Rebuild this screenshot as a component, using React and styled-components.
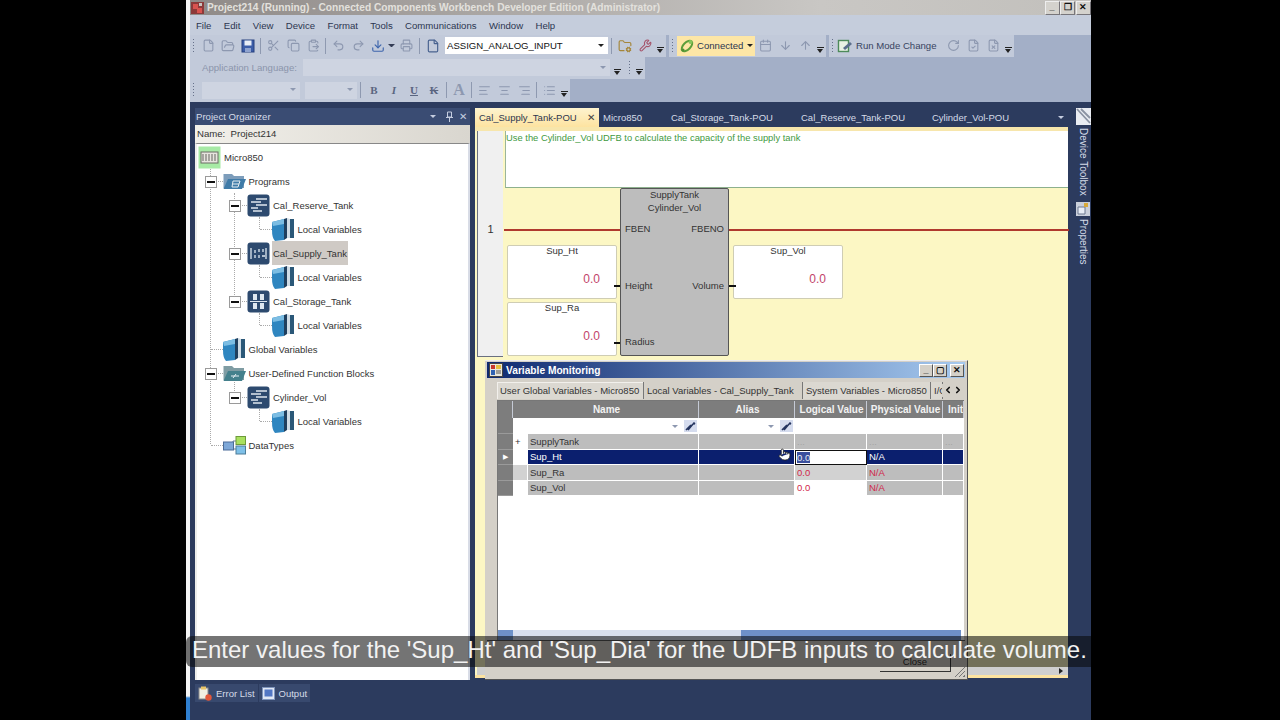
import React from 'react';
import styled, {createGlobalStyle} from 'styled-components';
import {
    File, FolderOpen, Scissors, Copy, ClipboardPaste, Undo2, Redo2, Download, Printer,
    FolderCog, Wrench, Calendar, ArrowDown, ArrowUp, RotateCw, FileCheck, FileX, Pointer,
    AlignLeft, AlignCenter, AlignRight, List, ChevronLeft, ChevronRight
} from 'lucide-react';

const GlobalStyle = createGlobalStyle`
  html, body, #root {
    margin: 0;
    padding: 0;
    width: 1280px;
    height: 720px;
    overflow: hidden;
    background: #000;
  }
  * { box-sizing: border-box; }
`

const SaveIcon = () => (
    <svg width="14" height="14" viewBox="0 0 14 14">
        <rect x="1" y="1" width="12" height="12" fill="#3c5da8" stroke="#26407f"/>
        <rect x="3.5" y="1.5" width="7" height="5" fill="#e8edf6"/>
        <rect x="4" y="9" width="6" height="4" fill="#8fa3cf"/>
    </svg>
)

const LinkIcon = () => (
    <svg width="16" height="16" viewBox="0 0 16 16" fill="none">
        <ellipse cx="8" cy="8" rx="6.5" ry="3.6" transform="rotate(-45 8 8)" stroke="#5c9e3a" strokeWidth="2"/>
        <circle cx="11.5" cy="4" r="2" fill="#86c45b"/>
        <circle cx="4" cy="12" r="1.6" fill="#4f8f32"/>
    </svg>
)

const RunModeIcon = () => (
    <svg width="16" height="14" viewBox="0 0 16 14" fill="none">
        <rect x="1.5" y="1.5" width="10" height="11" fill="#e9f2e4" stroke="#4d8a5a" strokeWidth="1.4"/>
        <path d="M6 9 L13 3 L15 5 L8 11 Z" fill="#5b6f8c"/>
    </svg>
)

const AppLogo = () => (
    <svg width="14" height="14" viewBox="0 0 14 14">
        <rect x="0" y="1" width="13" height="12" fill="#8c3a3a"/>
        <path d="M2 3 H7 V7 H11 V12 H6 V8 H2 Z" fill="#d9534f"/>
        <rect x="8" y="2" width="3" height="3" fill="#c9c4c0"/>
    </svg>
)

const ControllerIcon = () => (
    <svg width="23" height="23" viewBox="0 0 23 23">
        <rect x="0.5" y="0.5" width="22" height="22" fill="#a7eaa5"/>
        <rect x="3" y="6" width="17" height="11" fill="#e7e5df" stroke="#6d6d66"/>
        <path d="M5 8 V15 M8 8 V15 M11 8 V15 M14 8 V15 M17 8 V15" stroke="#8a8a84" strokeWidth="1.4"/>
    </svg>
)

const FolderIcon = ({udfb}) => (
    <svg width="23" height="18" viewBox="0 0 23 18">
        <path d="M0.5 2 H9 L11 4 H21 V16 H0.5 Z" fill={udfb ? "#7f9ca3" : "#7d9dbb"}/>
        <path d="M0.5 17 L5 7 H23 L19 17 Z" fill={udfb ? "#44808c" : "#3f7ba8"}/>
        <path d={udfb ? "M8 12 H16 M10 14 L13 10" : "M10 9 H17 L15 15 H9 Z M10 12 H16"} stroke="#e6eef3" strokeWidth="1" fill="none"/>
    </svg>
)

const ProgramIcon = ({kind}) => (
    <svg width="23" height="23" viewBox="0 0 23 23">
        <rect x="0.5" y="0.5" width="22" height="22" rx="3" fill="#2d4a6f"/>
        {kind === "ladder" && (
            <path d="M4 6 V17 M19 6 V17 M8 8 V11 M8 13 V16 M12 7 V10 M12 13 V16 M16 7 V10 M15 14 H18" stroke="#dfe8f0" strokeWidth="1.3" fill="none"/>
        )}
        {kind === "blocks" && (
            <g fill="#dfe8f0">
                <rect x="6" y="4" width="4" height="6"/>
                <rect x="13" y="4" width="4" height="6"/>
                <rect x="6" y="13" width="4" height="6"/>
                <rect x="13" y="13" width="4" height="6"/>
                <rect x="3" y="11" width="17" height="1"/>
            </g>
        )}
        {kind === "text" && (
            <path d="M9 5 H20 M4 8 H14 M9 11 H20 M4 14 H11 M6 17 H15" stroke="#dfe8f0" strokeWidth="1.5" fill="none"/>
        )}
    </svg>
)

const VariablesIcon = () => (
    <svg width="22" height="23" viewBox="0 0 22 23">
        <path d="M0 4 L12 1 V22 L3 23 Q0 20 0 12 Z" fill="#2f86c0"/>
        <path d="M0 4 L12 1 L12 6 L1 8 Z" fill="#7cbde3"/>
        <path d="M12 1 L15 0 V20 L12 22 Z" fill="#1f3f5e"/>
        <path d="M15 0 L18 1 V20 L15 20 Z" fill="#cfdce6"/>
        <path d="M18 1 L22 1 V20 L18 20 Z" fill="#2b5878"/>
    </svg>
)

const DataTypesIcon = () => (
    <svg width="23" height="19" viewBox="0 0 23 19">
        <path d="M10 5 H15 M10 13 H13 M10 5 V13" stroke="#6b7f99"/>
        <rect x="0.5" y="6" width="10" height="8" fill="#7ea8d8" stroke="#4c6d99"/>
        <rect x="13" y="0.5" width="9.5" height="8" fill="#a9e05f" stroke="#6d9a3a"/>
        <rect x="13" y="10" width="9.5" height="8" fill="#7ec0e8" stroke="#4c7d99"/>
    </svg>
)

const ErrorListIcon = () => (
    <svg width="14" height="15" viewBox="0 0 14 15">
        <rect x="1" y="2" width="9" height="11" fill="#f1eee2" stroke="#8b8b8b"/>
        <rect x="3" y="0.5" width="5" height="3" fill="#e8c468"/>
        <circle cx="10.5" cy="11.5" r="3.2" fill="#e2573b"/>
    </svg>
)

const OutputIcon = () => (
    <svg width="13" height="13" viewBox="0 0 13 13">
        <rect x="0.5" y="0.5" width="12" height="12" fill="#dfe7f5" stroke="#7f94bb"/>
        <rect x="2.5" y="2.5" width="8" height="7" fill="#5277c4"/>
    </svg>
)

const GridFilterIcon = () => (
    <svg width="13" height="12" viewBox="0 0 13 12">
        <rect width="13" height="12" fill="#d5dcee"/>
        <path d="M2 10 L7 5 M4 10 L9 4" stroke="#24345f" strokeWidth="1.6"/>
        <circle cx="10" cy="3.5" r="1.2" fill="#24345f"/>
    </svg>
)

const MonitorIcon = () => (
    <svg width="14" height="14" viewBox="0 0 14 14">
        <rect x="0.5" y="0.5" width="13" height="13" fill="#e9e6dc" stroke="#444"/>
        <rect x="2" y="2" width="4" height="4" fill="#c8372d"/>
        <rect x="7" y="2" width="5" height="4" fill="#e8c13f"/>
        <rect x="2" y="7" width="4" height="5" fill="#2f62b3"/>
        <path d="M7 8 H12 M7 10 H12" stroke="#555"/>
    </svg>
)

const PinIcon = () => (
    <svg width="9" height="11" viewBox="0 0 9 11" fill="none">
        <path d="M2.5 1 H6.5 V6 H2.5 Z M1 6.5 H8 M4.5 7 V11" stroke="#c5cde0"/>
    </svg>
)

const ToolboxIcon = () => (
    <svg width="15" height="17" viewBox="0 0 15 17">
        <rect width="15" height="17" fill="#e9ecf2"/>
        <path d="M1 1 L14 15 M5 1 L14 10" stroke="#8b93a3" strokeWidth="1.8" fill="none"/>
    </svg>
)

const PropertiesIcon = () => (
    <svg width="14" height="14" viewBox="0 0 14 14">
        <rect width="14" height="14" fill="#c9cfdb"/>
        <path d="M2 5 H9 V12 H2 Z" fill="#e8edf6" stroke="#6d7890"/>
        <path d="M8 1 H12 V5 H8 Z" fill="#d7a93a"/>
    </svg>
)

const Toolbars = () => (
    <>
        <ToolRow>
            <ToolGroup>
                <Grip/>
                <ToolBtn><File size={13}/></ToolBtn>
                <ToolBtn><FolderOpen size={14}/></ToolBtn>
                <ToolBtn><SaveIcon/></ToolBtn>
                <ToolSep/>
                <ToolBtn><Scissors size={13}/></ToolBtn>
                <ToolBtn><Copy size={13}/></ToolBtn>
                <ToolBtn><ClipboardPaste size={13}/></ToolBtn>
                <ToolSep/>
                <ToolBtn><Undo2 size={13}/></ToolBtn>
                <ToolBtn><Redo2 size={13}/></ToolBtn>
                <ToolBtn $tone="#3f66ad"><Download size={14}/></ToolBtn>
                <Caret/>
                <ToolBtn><Printer size={13}/></ToolBtn>
                <ToolSep $wide/>
                <ToolBtn $tone="#48628f"><File size={14}/></ToolBtn>
                <ComboGap $w={2}/>
                <Combo $width={163} $active>ASSIGN_ANALOG_INPUT<ComboArrow $dark/></Combo>
                <ToolSep $wide/>
                <ToolBtn $tone="#a5863a"><FolderCog size={14}/></ToolBtn>
                <ToolBtn $tone="#a5536a"><Wrench size={13}/></ToolBtn>
                <Overflow/>
            </ToolGroup>
            <ToolGroup>
                <Grip/>
                <ConnectedBtn><LinkIcon/>Connected<ComboArrow $dark/></ConnectedBtn>
                <ToolBtn><Calendar size={13}/></ToolBtn>
                <ToolBtn><ArrowDown size={13}/></ToolBtn>
                <ToolBtn><ArrowUp size={13}/></ToolBtn>
                <Overflow/>
            </ToolGroup>
            <ToolGroup>
                <Grip/>
                <RunModeBtn><RunModeIcon/>Run Mode Change</RunModeBtn>
                <ToolBtn><RotateCw size={13}/></ToolBtn>
                <ToolBtn><FileCheck size={13}/></ToolBtn>
                <ToolBtn><FileX size={13}/></ToolBtn>
                <Overflow/>
            </ToolGroup>
        </ToolRow>
        <ToolRow>
            <ToolGroup>
                <DisabledLabel>Application Language:</DisabledLabel>
                <Combo $width={307}><ComboArrow/></Combo>
                <ComboGap $w={2}/>
                <Overflow/>
                <ComboGap $w={3}/>
                <Grip/>
                <Overflow/>
            </ToolGroup>
        </ToolRow>
        <ToolRow $tall>
            <ToolGroup>
                <Grip/>
                <ComboGap $w={4}/>
                <Combo $width={98}><ComboArrow/></Combo>
                <ComboGap $w={5}/>
                <Combo $width={52}><ComboArrow/></Combo>
                <ToolSep $wide/>
                <Glyph>B</Glyph>
                <Glyph $italic>I</Glyph>
                <Glyph $underline>U</Glyph>
                <Glyph $strike>K</Glyph>
                <ToolSep/>
                <Glyph $big>A</Glyph>
                <ToolSep/>
                <ToolBtn><AlignLeft size={13}/></ToolBtn>
                <ToolBtn><AlignCenter size={13}/></ToolBtn>
                <ToolBtn><AlignRight size={13}/></ToolBtn>
                <ToolSep/>
                <ToolBtn><List size={13}/></ToolBtn>
                <Overflow/>
            </ToolGroup>
        </ToolRow>
    </>
)

const treeRows = [
    {level: 0, label: "Micro850", icon: <ControllerIcon/>},
    {level: 1, label: "Programs", icon: <FolderIcon/>, open: true},
    {level: 2, label: "Cal_Reserve_Tank", icon: <ProgramIcon kind="text"/>, open: true},
    {level: 3, label: "Local Variables", icon: <VariablesIcon/>},
    {level: 2, label: "Cal_Supply_Tank", icon: <ProgramIcon kind="ladder"/>, open: true, selected: true},
    {level: 3, label: "Local Variables", icon: <VariablesIcon/>},
    {level: 2, label: "Cal_Storage_Tank", icon: <ProgramIcon kind="blocks"/>, open: true},
    {level: 3, label: "Local Variables", icon: <VariablesIcon/>},
    {level: 1, label: "Global Variables", icon: <VariablesIcon/>},
    {level: 1, label: "User-Defined Function Blocks", icon: <FolderIcon udfb/>, open: true},
    {level: 2, label: "Cylinder_Vol", icon: <ProgramIcon kind="text"/>, open: true},
    {level: 3, label: "Local Variables", icon: <VariablesIcon/>},
    {level: 1, label: "DataTypes", icon: <DataTypesIcon/>},
]

const guides = [
    {x: 13, y: 25, h: 275},
    {x: 37, y: 49, h: 108},
    {x: 37, y: 229, h: 24},
    {x: 62, y: 73, h: 12},
    {x: 62, y: 121, h: 12},
    {x: 62, y: 169, h: 12},
    {x: 62, y: 265, h: 12},
]

const ProjectOrganizer = () => (
    <Organizer>
        <PaneHeader>
            Project Organizer
            <PaneActions>
                <ComboArrow $light/>
                <PinIcon/>
                <span>✕</span>
            </PaneActions>
        </PaneHeader>
        <NameBar>Name:&nbsp;&nbsp;Project214</NameBar>
        <Tree>
            {guides.map((g, i) => <Guide key={i} $x={g.x} $y={g.y} $h={g.h}/>)}
            {treeRows.map((row, i) => (
                <TreeRow key={i} $level={row.level}>
                    <TreeIcon $branch={row.level > 0}>
                        {row.open && <Expander/>}
                        {row.icon}
                    </TreeIcon>
                    <TreeLabel $selected={row.selected}>{row.label}</TreeLabel>
                </TreeRow>
            ))}
        </Tree>
    </Organizer>
)

const LadderEditor = () => (
    <Document>
        <DocTabs>
            <DocTab $active>Cal_Supply_Tank-POU<TabClose>✕</TabClose></DocTab>
            <DocTab $width={68}>Micro850</DocTab>
            <DocTab $width={130}>Cal_Storage_Tank-POU</DocTab>
            <DocTab $width={131}>Cal_Reserve_Tank-POU</DocTab>
            <DocTab $width={110}>Cylinder_Vol-POU</DocTab>
            <ComboArrow $light/>
        </DocTabs>
        <EditorBody>
            <Rung>
                <RungGutter>1</RungGutter>
                <RungMain>
                    <RungComment>Use the Cylinder_Vol UDFB to calculate the capacity of the supply tank</RungComment>
                    <RungCanvas>
                        <Wire $x={-1} $w={116}/>
                        <Wire $x={224} $w={340}/>
                        <VarBox $x={2} $y={57}>Sup_Ht<VarValue>0.0</VarValue></VarBox>
                        <VarBox $x={2} $y={114}>Sup_Ra<VarValue>0.0</VarValue></VarBox>
                        <VarBox $x={228} $y={57}>Sup_Vol<VarValue>0.0</VarValue></VarBox>
                        <Tick $x={109} $y={97}/>
                        <Tick $x={109} $y={154}/>
                        <Tick $x={224} $y={97}/>
                        <FunctionBlock>
                            <BlockTitle>SupplyTank<br/>Cylinder_Vol</BlockTitle>
                            <BlockPins>
                                <PinRow><span>FBEN</span><span>FBENO</span></PinRow>
                                <PinRow><span>Height</span><span>Volume</span></PinRow>
                                <PinRow><span>Radius</span></PinRow>
                            </BlockPins>
                        </FunctionBlock>
                    </RungCanvas>
                </RungMain>
            </Rung>
            <DocScroll><ScrollArrow/></DocScroll>
        </EditorBody>
    </Document>
)

const gridRows = [
    {name: "SupplyTank", kind: "group"},
    {name: "Sup_Ht", kind: "selected"},
    {name: "Sup_Ra", kind: "plain", light: true},
    {name: "Sup_Vol", kind: "plain"},
]

const VariableMonitoring = () => (
    <MonitorWindow>
        <MonitorTitle>
            <MonitorIcon/>
            <MonitorCaption>Variable Monitoring</MonitorCaption>
            <WinButton>_</WinButton>
            <WinButton>▢</WinButton>
            <WinButton $gap>✕</WinButton>
        </MonitorTitle>
        <MonitorTabs>
            <MonitorTab $width={147} $boxed>User Global Variables - Micro850</MonitorTab>
            <MonitorTab $width={159} $active>Local Variables - Cal_Supply_Tank</MonitorTab>
            <MonitorTab $width={128}>System Variables - Micro850</MonitorTab>
            <MonitorTab $width={12}>I/O</MonitorTab>
            <TabScroll><ChevronLeft size={10} strokeWidth={4}/></TabScroll>
            <TabScroll><ChevronRight size={10} strokeWidth={4}/></TabScroll>
        </MonitorTabs>
        <GridFrame>
            <GridHead>
                <GridHeadCell/>
                <GridHeadCell>Name</GridHeadCell>
                <GridHeadCell>Alias</GridHeadCell>
                <GridHeadCell>Logical Value</GridHeadCell>
                <GridHeadCell>Physical Value</GridHeadCell>
                <GridHeadCell $clip>Initi</GridHeadCell>
            </GridHead>
            <FilterRow>
                <RowMark/>
                <FilterCell><ComboArrow/><GridFilterIcon/></FilterCell>
                <FilterCell><ComboArrow/><GridFilterIcon/></FilterCell>
                <span/><span/><span/>
            </FilterRow>
            {gridRows.map(row => (
                <GridRow key={row.name}>
                    <RowMark>{row.kind === "selected" && "▶"}</RowMark>
                    <Cell $tone={row.kind === "selected" ? "white" : row.light ? "light" : "white"}>{row.kind === "group" && "+"}</Cell>
                    <Cell $tone={row.kind === "selected" ? "navy" : "gray"}>{row.name}</Cell>
                    <Cell $tone={row.kind === "selected" ? "navy" : "gray"}/>
                    {row.kind === "group" && <><Cell $tone="gray" $faint>...</Cell><Cell $tone="gray" $faint>...</Cell></>}
                    {row.kind === "selected" && <><EditCell><EditText>0.0</EditText></EditCell><Cell $tone="navy">N/A</Cell></>}
                    {row.kind === "plain" && <><Cell $tone={row.light ? "light" : "white"} $red>0.0</Cell><Cell $tone="gray" $red>N/A</Cell></>}
                    <Cell $tone={row.kind === "selected" ? "navy" : "gray"} $faint>{row.kind === "group" && "..."}</Cell>
                </GridRow>
            ))}
            <HandCursor><Pointer size={13} fill="#fff" strokeWidth={1.5}/></HandCursor>
            <GridScroll><ScrollThumb/></GridScroll>
        </GridFrame>
        <MonitorFoot>
            <CloseButton>Close</CloseButton>
            <SizeGrip/>
        </MonitorFoot>
    </MonitorWindow>
)

const App = () => (
    <Page>
        <GlobalStyle/>
        <LeftEdge/>
        <AppFrame>
            <TitleBar>
                <AppLogo/>
                <TitleText>Project214 (Running) - Connected Components Workbench Developer Edition (Administrator)</TitleText>
                <FrameButton>_</FrameButton>
                <FrameButton>❐</FrameButton>
                <FrameButton>✕</FrameButton>
            </TitleBar>
            <MenuBar>
                {["File", "Edit", "View", "Device", "Format", "Tools", "Communications", "Window", "Help"].map(m => <span key={m}>{m}</span>)}
            </MenuBar>
            <Toolbars/>
            <Workspace>
                <ProjectOrganizer/>
                <LadderEditor/>
                <SideRail>
                    <ToolboxIcon/>
                    <RailText>Device Toolbox</RailText>
                    <PropertiesIcon/>
                    <RailText>Properties</RailText>
                </SideRail>
            </Workspace>
            <BottomBar>
                <BottomTab><ErrorListIcon/>Error List</BottomTab>
                <BottomTab><OutputIcon/>Output</BottomTab>
            </BottomBar>
        </AppFrame>
        <VariableMonitoring/>
        <Caption>Enter values for the 'Sup_Ht' and 'Sup_Dia' for the UDFB inputs to calculate volume.</Caption>
    </Page>
)

const Page = styled.div`
  position: relative;
  display: flex;
  width: 1280px;
  height: 720px;
  padding-left: 186px;
  background: #000;
  font-family: "Liberation Sans", Arial, sans-serif;
  font-size: 9.6px;
  color: #333;
  overflow: hidden;
`

const LeftEdge = styled.div`
  width: 4px;
  background: linear-gradient(#f4f4f4 0, #f4f4f4 696px, #2f7fd0 698px);
`

const AppFrame = styled.div`
  display: flex;
  flex-direction: column;
  width: 901px;
  height: 720px;
  background: #2c3b5e;
`

const TitleBar = styled.div`
  display: flex;
  align-items: center;
  height: 15px;
  padding-left: 1px;
  background: linear-gradient(90deg, #8f8a88, #c9c7c4 70%, #c2c0bc);
`

const TitleText = styled.div`
  flex: 1;
  margin-left: 2px;
  font-size: 10.2px;
  font-weight: bold;
  color: #e3e1dd;
  white-space: nowrap;
`

const FrameButton = styled.div`
  width: 15px;
  height: 14px;
  margin-right: 0.5px;
  background: #d4d2cd;
  border: 1px solid #eee;
  border-right-color: #77757a;
  border-bottom-color: #77757a;
  font-size: 9px;
  line-height: 11px;
  font-weight: bold;
  text-align: center;
  color: #111;
`

const MenuBar = styled.div`
  display: flex;
  align-items: center;
  gap: 12.4px;
  height: 20px;
  padding-left: 6px;
  background: #c5cddc;
  color: #2c3550;
`

const ToolRow = styled.div`
  display: flex;
  height: ${p => p.$tall ? 23 : 22}px;
  gap: 3px;
  background: #a3afc7;
`

const ToolGroup = styled.div`
  display: flex;
  align-items: center;
  padding-bottom: 1px;
  background: #c2cada;
  height: 100%;
`

const Grip = styled.div`
  width: 8px;
  height: 14px;
  background: repeating-linear-gradient(#66718a 0 1px, transparent 1px 3px);
  background-size: 1px 100%;
  background-position: 3px 0;
  background-repeat: no-repeat;
`

const ToolBtn = styled.div`
  display: flex;
  align-items: center;
  justify-content: center;
  width: 20px;
  height: 20px;
  color: ${p => p.$tone || "#8d98b0"};
`

const ToolSep = styled.div`
  width: 1px;
  height: 16px;
  margin: 0 ${p => p.$wide ? 3 : 2}px;
  background: #8e99b0;
`

const Caret = styled.div`
  width: 7px;
  height: 4px;
  margin-right: 1px;
  border-top: 3px solid #333c55;
  border-left: 3px solid transparent;
  border-right: 3px solid transparent;
`

const Overflow = styled.div`
  width: 11px;
  height: 20px;
  position: relative;
  &::before {
    content: "";
    position: absolute;
    left: 2px;
    top: 11px;
    width: 7px;
    height: 1px;
    background: #222;
  }
  &::after {
    content: "";
    position: absolute;
    left: 2px;
    top: 13px;
    border-top: 4px solid #222;
    border-left: 3.5px solid transparent;
    border-right: 3.5px solid transparent;
  }
`

const Combo = styled.div`
  position: relative;
  display: flex;
  align-items: center;
  width: ${p => p.$width}px;
  height: 17px;
  padding: 0 0 1px 2px;
  background: ${p => p.$active ? "#fff" : "#ced4e1"};
  color: #111;
`

const ComboGap = styled.div`
  width: ${p => p.$w}px;
`

const ComboArrow = styled.span`
  display: inline-block;
  margin-left: auto;
  margin-right: 4px;
  border-top: 3px solid ${p => p.$dark ? "#222" : p.$light ? "#c5cde0" : "#8d98b0"};
  border-left: 3px solid transparent;
  border-right: 3px solid transparent;
`

const DisabledLabel = styled.div`
  width: 113px;
  padding-left: 12px;
  color: #8b95ab;
  white-space: nowrap;
`

const ConnectedBtn = styled.div`
  display: flex;
  align-items: center;
  gap: 2px;
  width: 78px;
  height: 20px;
  padding-left: 2px;
  background: #fde6a6;
  color: #2c3550;
  & > span { margin-right: 2px; }
`

const RunModeBtn = styled.div`
  display: flex;
  align-items: center;
  gap: 3px;
  width: 106px;
  color: #38435f;
  white-space: nowrap;
`

const Glyph = styled.div`
  width: 20px;
  text-align: center;
  font-family: "Liberation Serif", serif;
  font-weight: bold;
  font-size: ${p => p.$big ? 16 : 11}px;
  font-style: ${p => p.$italic ? "italic" : "normal"};
  text-decoration: ${p => p.$underline ? "underline" : p.$strike ? "line-through" : "none"};
  color: ${p => p.$big ? "#8d98b0" : "#5a6580"};
`

const Workspace = styled.div`
  display: flex;
  height: 578px;
  padding: 6px 0 0 5px;
  background: #2c3b5e;
`

const Organizer = styled.div`
  display: flex;
  flex-direction: column;
  width: 275px;
  margin-right: 5px;
`

const PaneHeader = styled.div`
  display: flex;
  align-items: center;
  height: 17px;
  padding-left: 1px;
  background: #3a4c73;
  color: #d5dbe8;
`

const PaneActions = styled.div`
  display: flex;
  align-items: center;
  gap: 5px;
  margin-left: auto;
  padding-right: 3px;
  font-size: 10px;
  color: #c5cde0;
`

const NameBar = styled.div`
  display: flex;
  align-items: center;
  height: 18px;
  padding: 0 0 1px 2px;
  background: linear-gradient(90deg, #f2f0ea, #d9d6cf);
  color: #333;
`

const Tree = styled.div`
  position: relative;
  flex: 1;
  padding: 1px 0 0 1px;
  background: #fff;
  border-top: 1px solid #888;
  border-left: 2px solid #eeeeec;
  border-right: 2px solid #d8dce6;
`

const Guide = styled.div`
  position: absolute;
  left: ${p => p.$x}px;
  top: ${p => p.$y}px;
  height: ${p => p.$h}px;
  border-left: 1px dotted #aaa;
`

const TreeRow = styled.div`
  display: flex;
  align-items: center;
  height: 24px;
  padding-left: ${p => p.$level * 24.5}px;
`

const TreeIcon = styled.div`
  position: relative;
  display: flex;
  align-items: center;
  justify-content: center;
  width: 23px;
  height: 23px;
  margin-right: 3px;
  &::before {
    content: "";
    display: ${p => p.$branch ? "block" : "none"};
    position: absolute;
    left: -12px;
    top: 11px;
    width: 12px;
    border-top: 1px dotted #aaa;
  }
`

const Expander = styled.div`
  position: absolute;
  left: -18px;
  top: 6px;
  width: 12px;
  height: 12px;
  background: #fff;
  border: 1px solid #9a9a9a;
  z-index: 1;
  &::after {
    content: "";
    position: absolute;
    left: 1px;
    top: 4px;
    width: 8px;
    height: 2px;
    background: #111;
  }
`

const TreeLabel = styled.div`
  display: flex;
  align-items: center;
  height: 24px;
  padding: 0 1px;
  margin-left: -1px;
  background: ${p => p.$selected ? "#cfcac5" : "transparent"};
  color: #333;
  font-size: 9.5px;
`

const Document = styled.div`
  display: flex;
  flex-direction: column;
  width: 593px;
  margin-right: 7px;
`

const DocTabs = styled.div`
  display: flex;
  align-items: center;
  height: 19px;
`

const DocTab = styled.div`
  display: flex;
  align-items: center;
  width: ${p => p.$active ? 124 : p.$width}px;
  height: 19px;
  padding-left: 4px;
  background: ${p => p.$active ? "linear-gradient(#fdf3cf, #fde3a0)" : "transparent"};
  color: ${p => p.$active ? "#2c3550" : "#d5dbe8"};
  font-size: 9.5px;
  white-space: nowrap;
`

const TabClose = styled.span`
  margin-left: auto;
  margin-right: 4px;
  font-size: 10px;
  color: #444;
`

const EditorBody = styled.div`
  display: flex;
  flex-direction: column;
  flex: 1;
  padding: 4px 0 0 2px;
  margin-bottom: 2px;
  background: #fcf7c4;
  box-shadow: inset 0 4px 0 #f7e6ac, inset 0 -3px 0 #fde3a0;
`

const Rung = styled.div`
  display: flex;
  flex: 1;
`

const RungGutter = styled.div`
  display: flex;
  align-items: center;
  justify-content: center;
  width: 26px;
  height: 226px;
  padding-bottom: 29px;
  background: #f0f0f0;
  border-left: 1px solid #6a7080;
  border-bottom: 1px solid #6a7080;
  font-size: 11px;
  color: #333;
`

const RungMain = styled.div`
  display: flex;
  flex-direction: column;
  flex: 1;
  margin-left: 2px;
`

const RungComment = styled.div`
  height: 57px;
  padding: 1px 0 0 0;
  background: #fff;
  border-left: 1px solid #9ab59a;
  border-bottom: 1px solid #8db08d;
  color: #3f9a3f;
  font-size: 9.4px;
`

const RungCanvas = styled.div`
  position: relative;
  flex: 1;
`

const Wire = styled.div`
  position: absolute;
  left: ${p => p.$x}px;
  top: 41px;
  width: ${p => p.$w}px;
  height: 2px;
  background: #b03a2e;
`

const Tick = styled.div`
  position: absolute;
  left: ${p => p.$x}px;
  top: ${p => p.$y}px;
  width: 7px;
  height: 1.5px;
  background: #111;
`

const VarBox = styled.div`
  position: absolute;
  left: ${p => p.$x}px;
  top: ${p => p.$y}px;
  width: 110px;
  height: 54px;
  background: #fff;
  border: 1px solid #cfcdb4;
  border-radius: 2px;
  text-align: center;
  font-size: 9.5px;
  line-height: 9px;
  color: #333;
`

const VarValue = styled.div`
  margin-top: 17px;
  padding-right: 16px;
  text-align: right;
  font-size: 12px;
  line-height: 14px;
  color: #c2446a;
`

const FunctionBlock = styled.div`
  position: absolute;
  left: 115px;
  top: 0;
  width: 109px;
  height: 168px;
  background: #bdbdbd;
  border: 1px solid #555;
  border-radius: 2px;
  font-size: 9.5px;
  color: #333;
`

const BlockTitle = styled.div`
  margin-top: -1px;
  text-align: center;
  line-height: 13px;
`

const BlockPins = styled.div`
  display: flex;
  flex-direction: column;
  gap: 44.5px;
  margin-top: 9px;
  padding: 0 4px;
`

const PinRow = styled.div`
  display: flex;
  justify-content: space-between;
  height: 12px;
`

const DocScroll = styled.div`
  display: flex;
  justify-content: flex-end;
  align-items: center;
  height: 8px;
  margin-bottom: 3px;
  background: #cfcfcf;
`

const ScrollArrow = styled.div`
  margin-right: 5px;
  border-left: 4px solid #222;
  border-top: 3px solid transparent;
  border-bottom: 3px solid transparent;
`

const SideRail = styled.div`
  display: flex;
  flex-direction: column;
  align-items: center;
  gap: 3px;
  width: 16px;
  & > svg:last-of-type { margin-top: 3px; }
`

const RailText = styled.div`
  writing-mode: vertical-rl;
  color: #d5dbe8;
  font-size: 10px;
  white-space: nowrap;
`

const BottomBar = styled.div`
  display: flex;
  gap: 1px;
  height: 40px;
  padding: 4px 0 0 5px;
`

const BottomTab = styled.div`
  display: flex;
  align-items: center;
  gap: 4px;
  height: 18px;
  padding: 0 3px;
  background: #38496e;
  color: #d5dbe8;
  font-size: 9.5px;
`

const MonitorWindow = styled.div`
  position: absolute;
  left: 485px;
  top: 360px;
  display: flex;
  flex-direction: column;
  width: 483px;
  height: 320px;
  padding: 1px 2px 2px;
  background: #d4d0c8;
  border-right: 1px solid #555;
  border-bottom: 1px solid #555;
  border-top: 1px solid #eee;
`

const MonitorTitle = styled.div`
  display: flex;
  align-items: center;
  height: 16px;
  padding: 0 1px 0 2px;
  background: linear-gradient(90deg, #0f2a70, #a6caf0);
`

const MonitorCaption = styled.div`
  flex: 1;
  margin-left: 3px;
  color: #fff;
  font-weight: bold;
  font-size: 10.2px;
`

const WinButton = styled.div`
  width: 14px;
  height: 13px;
  margin-left: ${p => p.$gap ? 3 : 0}px;
  background: #d4d0c8;
  border: 1px solid #fff;
  border-right-color: #555;
  border-bottom-color: #555;
  font-size: 9px;
  line-height: 10px;
  font-weight: bold;
  text-align: center;
  color: #111;
`

const MonitorTabs = styled.div`
  display: flex;
  align-items: center;
  height: 21px;
  padding: 3px 0 0 10px;
  overflow: hidden;
`

const MonitorTab = styled.div`
  display: flex;
  align-items: center;
  flex-shrink: 0;
  width: ${p => p.$width}px;
  height: 17px;
  padding-left: 3px;
  overflow: hidden;
  background: ${p => p.$active ? "#d4d0c8" : "#dbd8d1"};
  border-right: 1px solid #777;
  box-shadow: ${p => p.$boxed ? "inset 1px 1px 0 #f2f0ec" : "none"};
  color: #333;
  font-size: 9.5px;
  white-space: nowrap;
`

const TabScroll = styled.div`
  display: flex;
  align-items: center;
  justify-content: center;
  flex-shrink: 0;
  width: 11px;
  height: 13px;
  margin-left: -1px;
  background: #d4d0c8;
  color: #111;
`

const gridColumns = "15px 186px 96px 72px 76px 21px"

const GridFrame = styled.div`
  position: relative;
  width: 467px;
  height: 240px;
  margin: 1px 0 0 10px;
  background: #fff;
  border-top: 1px solid #777;
  border-left: 1px solid #777;
`

const GridHead = styled.div`
  display: grid;
  grid-template-columns: ${gridColumns};
  height: 17px;
  background: #7d7d7d;
`

const GridHeadCell = styled.div`
  display: flex;
  align-items: center;
  justify-content: ${p => p.$clip ? "flex-start" : "center"};
  padding-left: ${p => p.$clip ? 5 : 2}px;
  overflow: hidden;
  border-right: 1px solid #c5cad5;
  color: #f2f2f2;
  font-weight: bold;
  font-size: 10px;
  white-space: nowrap;
`

const FilterRow = styled.div`
  display: grid;
  grid-template-columns: ${gridColumns};
  height: 16px;
`

const FilterCell = styled.div`
  display: flex;
  align-items: center;
  padding-right: 2px;
  & > span { margin-right: 6px; }
`

const GridRow = styled.div`
  display: grid;
  grid-template-columns: 15px 15px 171px 96px 72px 76px 21px;
  height: 15.5px;
`

const RowMark = styled.div`
  display: flex;
  align-items: center;
  justify-content: center;
  background: #7d7d7d;
  border-bottom: 1px solid #9a9a9a;
  color: #fff;
  font-size: 7px;
`

const toneColors = {
    gray: "#bdbdbd",
    navy: "#0b1f6e",
    light: "#d2d2d2",
    white: "#fff",
}

const Cell = styled.div`
  display: flex;
  align-items: center;
  padding-left: 2px;
  overflow: hidden;
  background: ${p => toneColors[p.$tone]};
  border-right: 1px solid #fff;
  border-bottom: 1.5px solid #fff;
  color: ${p => p.$red ? "#d1274b" : p.$faint ? "#a5a5a5" : p.$tone === "navy" ? "#fff" : "#333"};
  font-size: 9.5px;
`

const EditCell = styled.div`
  display: flex;
  align-items: center;
  padding-left: 1px;
  background: #fff;
  border: 1px solid #111;
`

const EditText = styled.span`
  background: #3a4f9c;
  color: #e8ebf5;
  font-size: 9.5px;
`

const HandCursor = styled.div`
  position: absolute;
  left: 280px;
  top: 47px;
  color: #222;
`

const GridScroll = styled.div`
  position: absolute;
  left: 0;
  right: 3px;
  top: 229px;
  height: 10px;
  background: #6e90c8;
`

const ScrollThumb = styled.div`
  width: 243px;
  height: 10px;
  background: linear-gradient(90deg, #6e90c8 15px, #d8deee 15px);
`

const MonitorFoot = styled.div`
  position: relative;
  flex: 1;
  border-top: 1px solid #555;
`

const CloseButton = styled.div`
  position: absolute;
  right: 14px;
  bottom: 5px;
  width: 71px;
  height: 18px;
  background: #d4d0c8;
  border-right: 1px solid #333;
  border-bottom: 1px solid #333;
  text-align: center;
  line-height: 16px;
  font-size: 9.5px;
  color: #222;
`

const SizeGrip = styled.div`
  position: absolute;
  right: 0;
  bottom: 0;
  width: 11px;
  height: 11px;
  background: repeating-linear-gradient(135deg, transparent 0 2px, #777 2px 3px);
  clip-path: polygon(100% 0, 100% 100%, 0 100%);
`

const Caption = styled.div`
  position: absolute;
  left: 186px;
  top: 636px;
  width: 905px;
  height: 31px;
  padding-left: 6px;
  background: rgba(8, 8, 8, 0.56);
  border-radius: 6px 0 0 6px;
  color: #f2f2f2;
  font-size: 24px;
  line-height: 28px;
  white-space: nowrap;
`

export default App;
